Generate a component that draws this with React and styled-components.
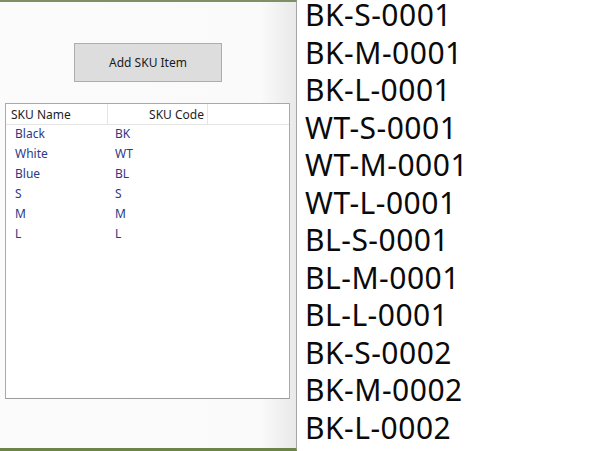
import React from "react";
import styled, { createGlobalStyle } from "styled-components";

const GlobalStyle = createGlobalStyle`
  html, body {
    margin: 0;
    padding: 0;
    background: #ffffff;
  }
  body {
    font-family: "Noto Sans", "Open Sans", sans-serif;
  }
`;

const Screen = styled.div`
  width: 600px;
  height: 451px;
  display: flex;
  overflow: hidden;
`;

const FormWindow = styled.div`
  box-sizing: border-box;
  width: 297px;
  height: 451px;
  flex-shrink: 0;
  display: flex;
  flex-direction: column;
  align-items: center;
  border-top: 2px solid #7f8f66;
  border-bottom: 3px solid #6d8449;
  border-right: 1px solid #a4a4a4;
  background: linear-gradient(to right, #fbfbfb 0%, #fafafa 88%, #e9e9e9 100%);
  font-family: "Segoe UI", "Noto Sans", "Open Sans", sans-serif;
`;

const AddButton = styled.button`
  box-sizing: border-box;
  margin-top: 41px;
  width: 148px;
  height: 39px;
  border: 1px solid #adadad;
  background: #dddddd;
  color: #1b1b1b;
  font-family: inherit;
  font-size: 12px;
  padding: 0;
`;

const ListView = styled.div`
  box-sizing: border-box;
  align-self: flex-start;
  margin-top: 21px;
  margin-left: 5px;
  width: 285px;
  height: 296px;
  border: 1px solid #a9a9a9;
  border-bottom-color: #9c9c9c;
  background: #ffffff;
  display: flex;
  flex-direction: column;
`;

const HeaderRow = styled.div`
  display: flex;
  height: 20px;
  border-bottom: 1px solid #e5e5e5;
  font-size: 12px;
  color: #1e1e1e;
`;

const HeaderCell = styled.div`
  box-sizing: border-box;
  width: ${(p) => p.$width}px;
  display: flex;
  align-items: center;
  justify-content: ${(p) => (p.$right ? "flex-end" : "flex-start")};
  padding: 0 ${(p) => (p.$right ? "3px" : "0")} 0 ${(p) => (p.$right ? "0" : "5px")};
  border-right: 1px solid #e5e5e5;
`;

const Rows = styled.div`
  margin-top: -2px;
`;

const Row = styled.div`
  display: flex;
  height: 20px;
  align-items: center;
  font-size: 12px;
  color: #2b3a85;
`;

const Cell = styled.div`
  box-sizing: border-box;
  width: ${(p) => p.$width}px;
  padding-left: ${(p) => p.$pad}px;
`;

const CodePane = styled.div`
  flex: 1;
  background: #ffffff;
  padding-left: 8px;
  display: flex;
  flex-direction: column;
`;

const CodeLine = styled.div`
  font-family: "Noto Sans", "Open Sans", sans-serif;
  font-size: 30px;
  letter-spacing: 0.5px;
  line-height: ${(p) => (p.$first ? "29.5px" : "37.5px")};
  height: ${(p) => (p.$first ? "33.5px" : "37.5px")};
  color: #0a0a0a;
  white-space: nowrap;
`;

const items = [
  ["Black", "BK"],
  ["White", "WT"],
  ["Blue", "BL"],
  ["S", "S"],
  ["M", "M"],
  ["L", "L"],
];

const codes = [
  "BK-S-0001",
  "BK-M-0001",
  "BK-L-0001",
  "WT-S-0001",
  "WT-M-0001",
  "WT-L-0001",
  "BL-S-0001",
  "BL-M-0001",
  "BL-L-0001",
  "BK-S-0002",
  "BK-M-0002",
  "BK-L-0002",
];

export default function App() {
  return (
    <>
      <GlobalStyle />
      <Screen>
        <FormWindow>
          <AddButton>Add SKU Item</AddButton>
          <ListView>
            <HeaderRow>
              <HeaderCell $width={102}>SKU Name</HeaderCell>
              <HeaderCell $width={100} $right>
                SKU Code
              </HeaderCell>
            </HeaderRow>
            <Rows>
              {items.map(([name, code]) => (
                <Row key={name}>
                  <Cell $width={102} $pad={9}>
                    {name}
                  </Cell>
                  <Cell $width={100} $pad={7}>
                    {code}
                  </Cell>
                </Row>
              ))}
            </Rows>
          </ListView>
        </FormWindow>
        <CodePane>
          {codes.map((c, i) => (
            <CodeLine key={c} $first={i === 0}>
              {c}
            </CodeLine>
          ))}
        </CodePane>
      </Screen>
    </>
  );
}
